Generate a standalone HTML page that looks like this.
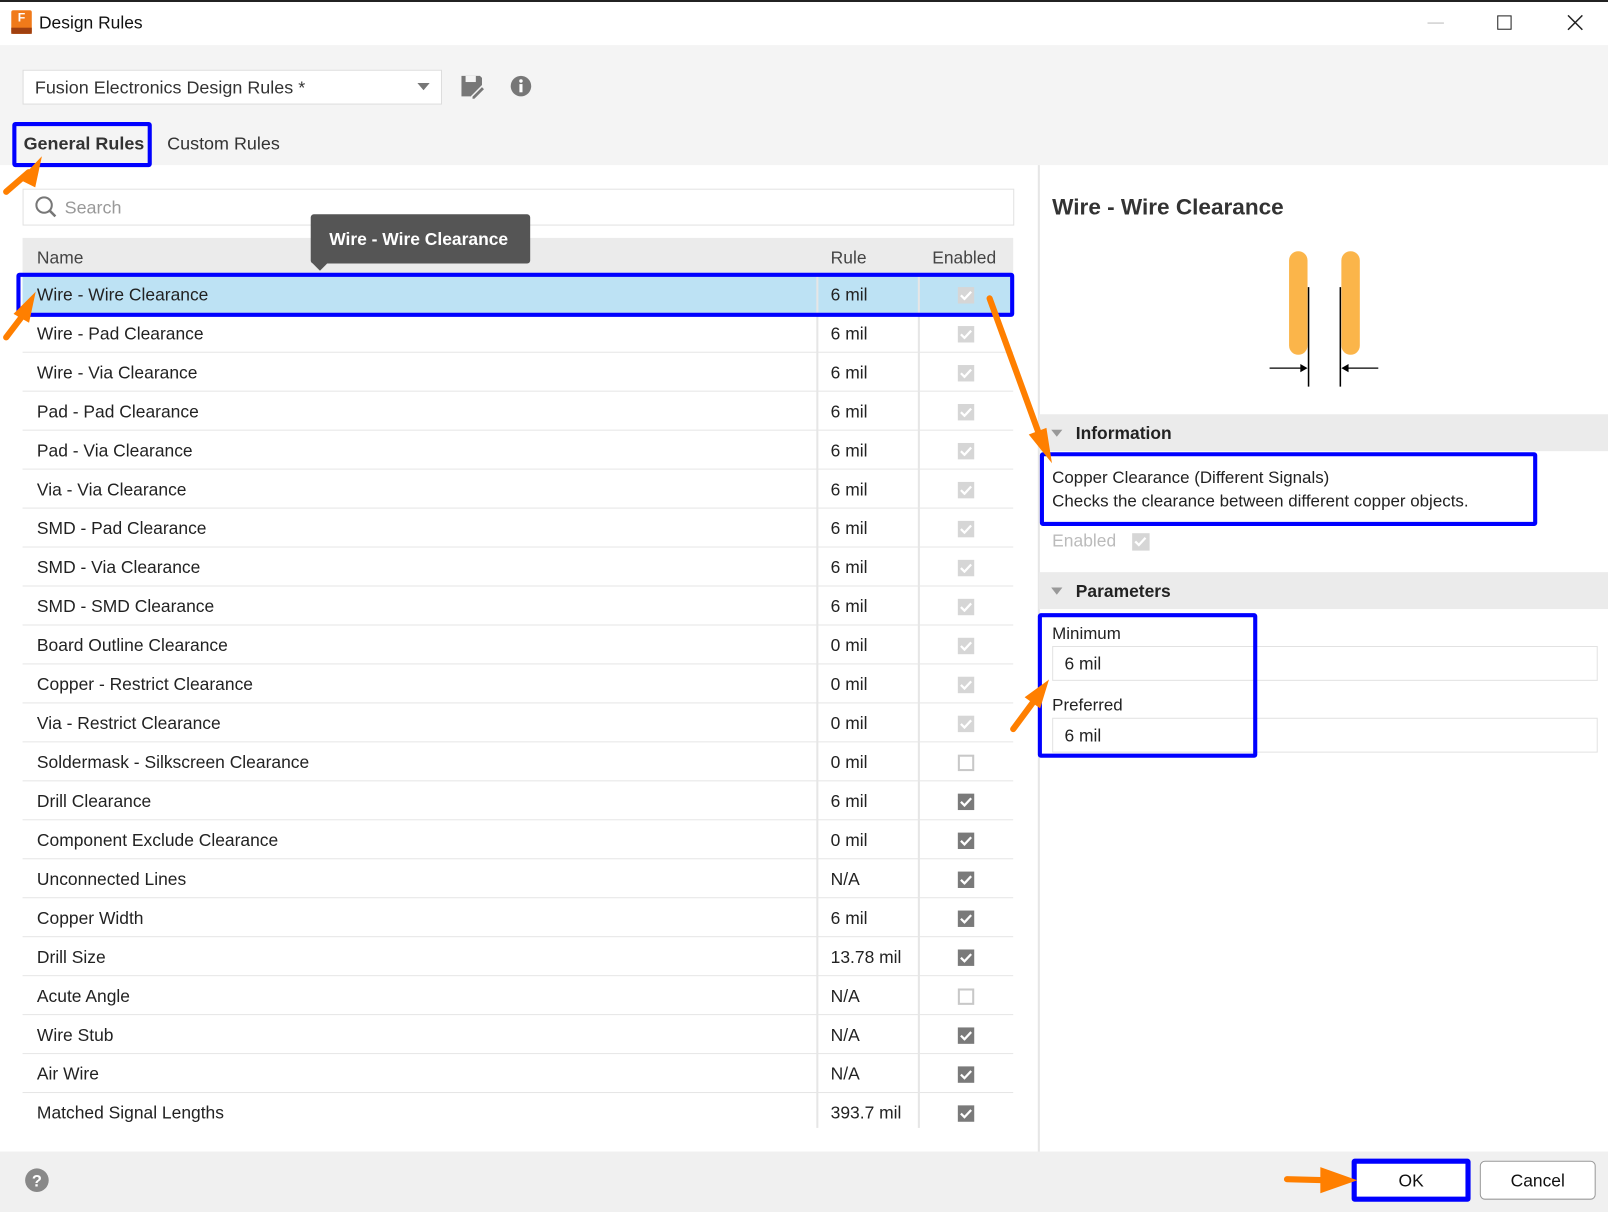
<!DOCTYPE html>
<html><head><meta charset="utf-8"><style>
*{box-sizing:border-box;margin:0;padding:0}
html,body{width:1608px;height:1212px;overflow:hidden;background:#fff}
#w{position:absolute;left:0;top:0;width:1568px;height:1182px;transform:scale(1.02551,1.02538);transform-origin:0 0;font-family:"Liberation Sans",sans-serif;color:#222;font-size:17px}
.a{position:absolute}
.row{position:absolute;left:22px;width:966px;height:38px;border-bottom:1px solid #e6e6e6}
.row span{position:absolute;top:10px}
.n{left:14px}.r{left:788px}
.cb{position:absolute;left:912px;top:12px;width:16px;height:16px}
.cd{background:#d6d6d6}.cu{border:2px solid #c8c8c8;background:#fff}.ck{background:#7a7a7a}
.cb svg{position:absolute;left:2px;top:3px}
.hdr{position:absolute;left:1013px;width:555px;height:36px;background:#ebebeb;font-weight:bold;font-size:17px}
.bb{position:absolute;border:4px solid #0000ff;border-radius:3px}
</style></head><body><div id="w">
<div class="a" style="left:0;top:0;width:1568px;height:2px;background:#222"></div>
<div class="a" style="left:0;top:2px;width:1568px;height:42px;background:#fff"></div>
<div class="a" style="left:11px;top:10px;width:20px;height:23px;background:#f07a1a;border-radius:2px;color:#fff;font-weight:bold;font-size:12px;text-align:center;line-height:14px">F</div>
<div class="a" style="left:11px;top:27px;width:20px;height:6px;background:#a04010"></div>
<div class="a" style="left:38px;top:13px;font-size:17px;color:#111">Design Rules</div>
<div class="a" style="left:1392px;top:22px;width:16px;height:1px;background:#bbb"></div>
<div class="a" style="left:1460px;top:15px;width:14px;height:14px;border:1.5px solid #222"></div>
<svg class="a" style="left:1528px;top:14px" width="16" height="16"><path d="M1 1L15 15M15 1L1 15" stroke="#222" stroke-width="1.5"/></svg>
<div class="a" style="left:0;top:44px;width:1568px;height:117px;background:#f4f4f4"></div>
<div class="a" style="left:22px;top:68px;width:409px;height:34px;background:#fff;border:1.5px solid #ddd"></div>
<div class="a" style="left:34px;top:75px;font-size:17.5px;color:#333">Fusion Electronics Design Rules *</div>
<svg class="a" style="left:407px;top:81px" width="12" height="7"><path d="M0 0H12L6 7Z" fill="#777"/></svg>
<svg class="a" style="left:448px;top:72px" width="26" height="26"><path d="M2 2H20L22 4V14L14 22H2Z" fill="#777"/><rect x="6" y="2" width="10" height="6" fill="#f4f4f4"/><path d="M12 22L22 12L25 15L15 25H12Z" fill="#777" stroke="#f4f4f4" stroke-width="1.5"/></svg>
<svg class="a" style="left:497px;top:73px" width="22" height="22"><circle cx="11" cy="11" r="10" fill="#777"/><rect x="9.5" y="9" width="3" height="8" fill="#fff"/><circle cx="11" cy="6" r="1.7" fill="#fff"/></svg>
<div class="a" style="left:23px;top:130px;font-weight:bold;font-size:17.5px;color:#333">General Rules</div>
<div class="a" style="left:163px;top:130px;font-size:17.5px;color:#333">Custom Rules</div>
<div class="bb" style="left:12px;top:119px;width:136px;height:44px"></div>
<div class="a" style="left:22px;top:184px;width:967px;height:36px;border:1.5px solid #e2e2e2"></div>
<svg class="a" style="left:33px;top:190px" width="24" height="24"><circle cx="10" cy="10" r="7.5" fill="none" stroke="#777" stroke-width="2"/><path d="M15.5 15.5L21 21" stroke="#777" stroke-width="2.5"/></svg>
<div class="a" style="left:63px;top:192px;font-size:17.5px;color:#999">Search</div>
<div class="a" style="left:22px;top:232px;width:966px;height:36px;background:#ebebeb"></div>
<div class="a" style="left:36px;top:242px;color:#444">Name</div>
<div class="a" style="left:810px;top:242px;color:#444">Rule</div>
<div class="a" style="left:909px;top:242px;color:#444">Enabled</div>
<div class="a" style="left:22px;top:268px;width:966px;height:38px;background:#bde2f4"></div>
<div class="a" style="left:796px;top:268px;width:2px;height:832px;background:#e6e6e6"></div>
<div class="a" style="left:895px;top:268px;width:2px;height:832px;background:#e6e6e6"></div>
<div id="rows"></div>
<script>
var d=[["Wire - Wire Clearance","6 mil","d"],["Wire - Pad Clearance","6 mil","d"],["Wire - Via Clearance","6 mil","d"],["Pad - Pad Clearance","6 mil","d"],["Pad - Via Clearance","6 mil","d"],["Via - Via Clearance","6 mil","d"],["SMD - Pad Clearance","6 mil","d"],["SMD - Via Clearance","6 mil","d"],["SMD - SMD Clearance","6 mil","d"],["Board Outline Clearance","0 mil","d"],["Copper - Restrict Clearance","0 mil","d"],["Via - Restrict Clearance","0 mil","d"],["Soldermask - Silkscreen Clearance","0 mil","u"],["Drill Clearance","6 mil","k"],["Component Exclude Clearance","0 mil","k"],["Unconnected Lines","N/A","k"],["Copper Width","6 mil","k"],["Drill Size","13.78 mil","k"],["Acute Angle","N/A","u"],["Wire Stub","N/A","k"],["Air Wire","N/A","k"],["Matched Signal Lengths","393.7 mil","k"]];
var h="";d.forEach(function(r,i){var chk=r[2]=="u"?"":'<svg width="12" height="10"><path d="M1 5L4.5 8.5L11 1.5" fill="none" stroke="#fff" stroke-width="2.2"/></svg>';
var bd=i==d.length-1?'border-bottom:none;':'';
h+='<div class="row" style="'+bd+'top:'+(268+i*38)+'px"><span class="n">'+r[0]+'</span><span class="r">'+r[1]+'</span><div class="cb c'+r[2]+'">'+chk+'</div></div>';});
document.getElementById("rows").innerHTML=h;
</script>
<div class="bb" style="left:16px;top:266px;width:973px;height:43px"></div>
<div class="a" style="left:303px;top:209px;width:214px;height:48px;background:#555;border-radius:3px;color:#fff;font-weight:bold;font-size:17px;padding:15px 0 0 18px">Wire - Wire Clearance</div>
<svg class="a" style="left:304px;top:256px" width="16" height="8"><path d="M0 0H16L8 8Z" fill="#555"/></svg>
<div class="a" style="left:1012px;top:161px;width:2px;height:962px;background:#e6e6e6"></div>
<div class="a" style="left:1026px;top:189px;font-weight:bold;font-size:22px;color:#333">Wire - Wire Clearance</div>
<svg class="a" style="left:1230px;top:240px" width="120" height="140"><rect x="27" y="5" width="18" height="101" rx="9" fill="#fbb54a"/><rect x="78" y="5" width="18" height="101" rx="9" fill="#fbb54a"/><path d="M46 40V137M77 40V137" stroke="#000" stroke-width="1.5"/><path d="M8 119H40M82 119H114" stroke="#000" stroke-width="1.3"/><path d="M45 119L38 115V123Z M78 119L85 115V123Z" fill="#000"/></svg>
<div class="hdr" style="top:404px"><span class="a" style="left:36px;top:9px">Information</span></div>
<svg class="a" style="left:1025px;top:419px" width="11" height="7"><path d="M0 0H11L5.5 7Z" fill="#999"/></svg>
<div class="a" style="left:1026px;top:455px;font-size:16.5px;line-height:23px;color:#222">Copper Clearance (Different Signals)<br>Checks the clearance between different copper objects.</div>
<div class="bb" style="left:1014px;top:441px;width:485px;height:72px"></div>
<div class="a" style="left:1026px;top:518px;color:#bbb">Enabled</div>
<div class="a" style="left:1104px;top:520px;width:17px;height:17px;background:#d6d6d6"><svg style="position:absolute;left:2px;top:3px" width="12" height="10"><path d="M1 5L4.5 8.5L11 1.5" fill="none" stroke="#fff" stroke-width="2.2"/></svg></div>
<div class="hdr" style="top:558px"><span class="a" style="left:36px;top:9px">Parameters</span></div>
<svg class="a" style="left:1025px;top:573px" width="11" height="7"><path d="M0 0H11L5.5 7Z" fill="#999"/></svg>
<div class="a" style="left:1026px;top:609px;font-size:16.5px">Minimum</div>
<div class="a" style="left:1026px;top:630px;width:532px;height:34px;border:1.5px solid #e2e2e2;padding:7px 0 0 11px">6 mil</div>
<div class="a" style="left:1026px;top:679px;font-size:16.5px">Preferred</div>
<div class="a" style="left:1026px;top:700px;width:532px;height:34px;border:1.5px solid #e2e2e2;padding:7px 0 0 11px">6 mil</div>
<div class="bb" style="left:1012px;top:598px;width:214px;height:141px;background:transparent"></div>
<div class="a" style="left:0;top:1123px;width:1568px;height:59px;background:#f0f0f0"></div>
<svg class="a" style="left:24px;top:1139px" width="24" height="24"><circle cx="12" cy="12" r="11.5" fill="#888"/><text x="12" y="18" font-family="Liberation Sans" font-weight="bold" font-size="16" fill="#fff" text-anchor="middle">?</text></svg>
<div class="a" style="left:1318px;top:1130px;width:116px;height:42px;background:#fff;border:5px solid #0000ff;border-radius:3px;text-align:center;line-height:34px;font-size:17px;color:#111">OK</div>
<div class="a" style="left:1443px;top:1132px;width:113px;height:38px;background:#fff;border:1.5px solid #999;border-radius:5px;text-align:center;line-height:37px;font-size:17px;color:#111">Cancel</div>
<svg class="a" style="left:0;top:0" width="1568" height="1182">
<g stroke="#ff7f00" stroke-width="6" stroke-linecap="round" fill="#ff7f00">
<path d="M6 187L28 168" /><path d="M40 154L20 175L34 182Z" stroke-width="1"/>
<path d="M6 329L22 308"/><path d="M34 286L14 306L28 314Z" stroke-width="1"/>
<path d="M965 291L1012 420"/><path d="M1025 450L1004 424L1020 418Z" stroke-width="1"/>
<path d="M988 711L1008 684"/><path d="M1022 664L1000 680L1014 690Z" stroke-width="1"/>
<path d="M1255 1150L1292 1151"/><path d="M1322 1151L1288 1139L1288 1163Z" stroke-width="1"/>
</g></svg>
</div></body></html>
